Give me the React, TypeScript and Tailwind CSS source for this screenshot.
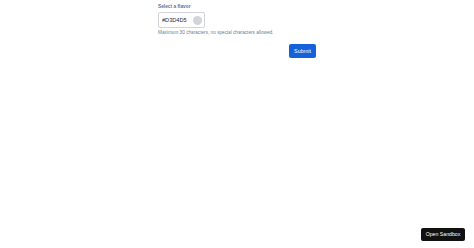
import { useState } from 'react';

export default function App() {
  const [flavor, setFlavor] = useState('#D3D4D5');

  return (
    <div className="relative h-[248px] w-full bg-white font-['Liberation_Sans',Arial,sans-serif]">
      <form
        className="mx-auto flex w-[158px] flex-col pt-[4px]"
        onSubmit={(e) => e.preventDefault()}
      >
        {/* Field */}
        <label className="mb-[2px] text-[4.8px] font-bold leading-[6px] text-[#687384]">Select a flavor</label>
        <div className="flex h-[16px] w-[47px] items-center justify-between rounded-[2px] border border-[#d1d5db] bg-white pl-[3px] pr-[2px]">
          <input
            value={flavor}
            onChange={(e) => setFlavor(e.target.value)}
            className="w-[30px] bg-transparent text-[5.6px] leading-[7px] text-[#1f2937] outline-none"
          />
          <span className="h-[9px] w-[9px] rounded-full bg-[#d3d4d5]" />
        </div>
        <p className="mt-[2px] text-[4.7px] leading-[6px] text-[#6b7f99]">
          Maximum 30 characters, no special characters allowed.
        </p>

        {/* Actions */}
        <div className="mt-[8px] flex justify-end">
          <button
            type="submit"
            className="h-[14px] w-[27px] rounded-[2px] bg-[#1461d9] text-[5.4px] leading-[14px] text-white"
          >
            Submit
          </button>
        </div>
      </form>

      <button className="absolute bottom-[7px] right-[9px] h-[13px] w-[44px] rounded-[2px] bg-[#111111] text-[5.2px] leading-[13px] text-white">
        Open Sandbox
      </button>
    </div>
  );
}
